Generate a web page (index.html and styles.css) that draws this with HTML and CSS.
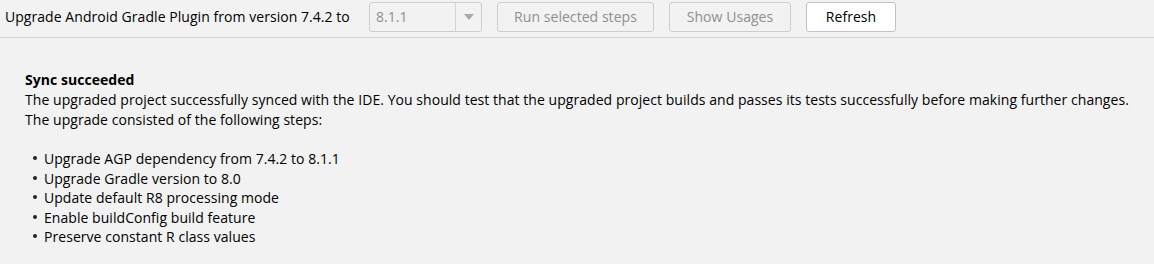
FILE: index.html
```html
<!DOCTYPE html>
<html><head><meta charset="utf-8"><link rel="stylesheet" href="styles.css"></head>
<body>
<div class="toolbar">
  <span class="label">Upgrade Android Gradle Plugin from version 7.4.2 to</span>
  <div class="combo disabled">
    <span class="combo-value">8.1.1</span>
    <span class="combo-arrow"><svg width="10" height="6" viewBox="0 0 10 6"><path d="M0 0H10L5 6Z" fill="#a8a8a8"/></svg></span>
  </div>
  <button class="btn disabled btn-run">Run selected steps</button>
  <button class="btn disabled btn-usages">Show Usages</button>
  <button class="btn btn-refresh">Refresh</button>
</div>
<div class="content">
  <div class="title">Sync succeeded</div>
  <div class="para">The upgraded project successfully synced with the IDE. You should test that the upgraded project builds and passes its tests successfully before making further changes.</div>
  <div class="para">The upgrade consisted of the following steps:</div>
  <ul class="steps">
    <li>Upgrade AGP dependency from 7.4.2 to 8.1.1</li>
    <li>Upgrade Gradle version to 8.0</li>
    <li>Update default R8 processing mode</li>
    <li>Enable buildConfig build feature</li>
    <li>Preserve constant R class values</li>
  </ul>
</div>
</body></html>
```
FILE: styles.css
```css
html,body{margin:0;padding:0;background:#f2f2f2}
body{font-family:"Open Sans","Noto Sans",sans-serif;font-size:14px;letter-spacing:0.05px;color:#000;width:1154px;height:264px;overflow:hidden}
.toolbar{display:flex;align-items:flex-start;height:35px;padding-top:2px;border-bottom:1px solid #d2d2d2;box-sizing:content-box}
.label{margin-left:5px;line-height:30px;width:364px;white-space:nowrap}
.combo{display:flex;width:113px;height:30px;box-sizing:border-box;border:1px solid #cdcdcd;border-radius:3px;background:#f2f2f2}
.combo-value{flex:1;padding-left:6px;line-height:28px;color:#8f8f8f;border-right:1px solid #d4d4d4}
.combo-arrow{width:25px;display:flex;align-items:center;justify-content:center}
.btn{font:inherit;letter-spacing:inherit;height:30px;box-sizing:border-box;border:1px solid #cdcdcd;border-radius:3px;background:#f2f2f2;padding:0;line-height:28px;margin:0}
.btn.disabled{color:#8f8f8f}
.btn-run{width:157px;margin-left:15px}
.btn-usages{width:122px;margin-left:15px}
.btn-refresh{width:90px;margin-left:15px;background:#fff;color:#000;border-color:#c2c2c2}
.content{padding:32px 0 0 25px}
.title{font-weight:700;line-height:20px}
.para{line-height:20px}
.steps{margin:19px 0 0 0;padding:0 0 0 19px;list-style:none}
.steps li{line-height:19.5px;position:relative}
.steps li::before{content:"";position:absolute;left:-11px;top:7px;width:4px;height:4px;border-radius:50%;background:#222}
```
